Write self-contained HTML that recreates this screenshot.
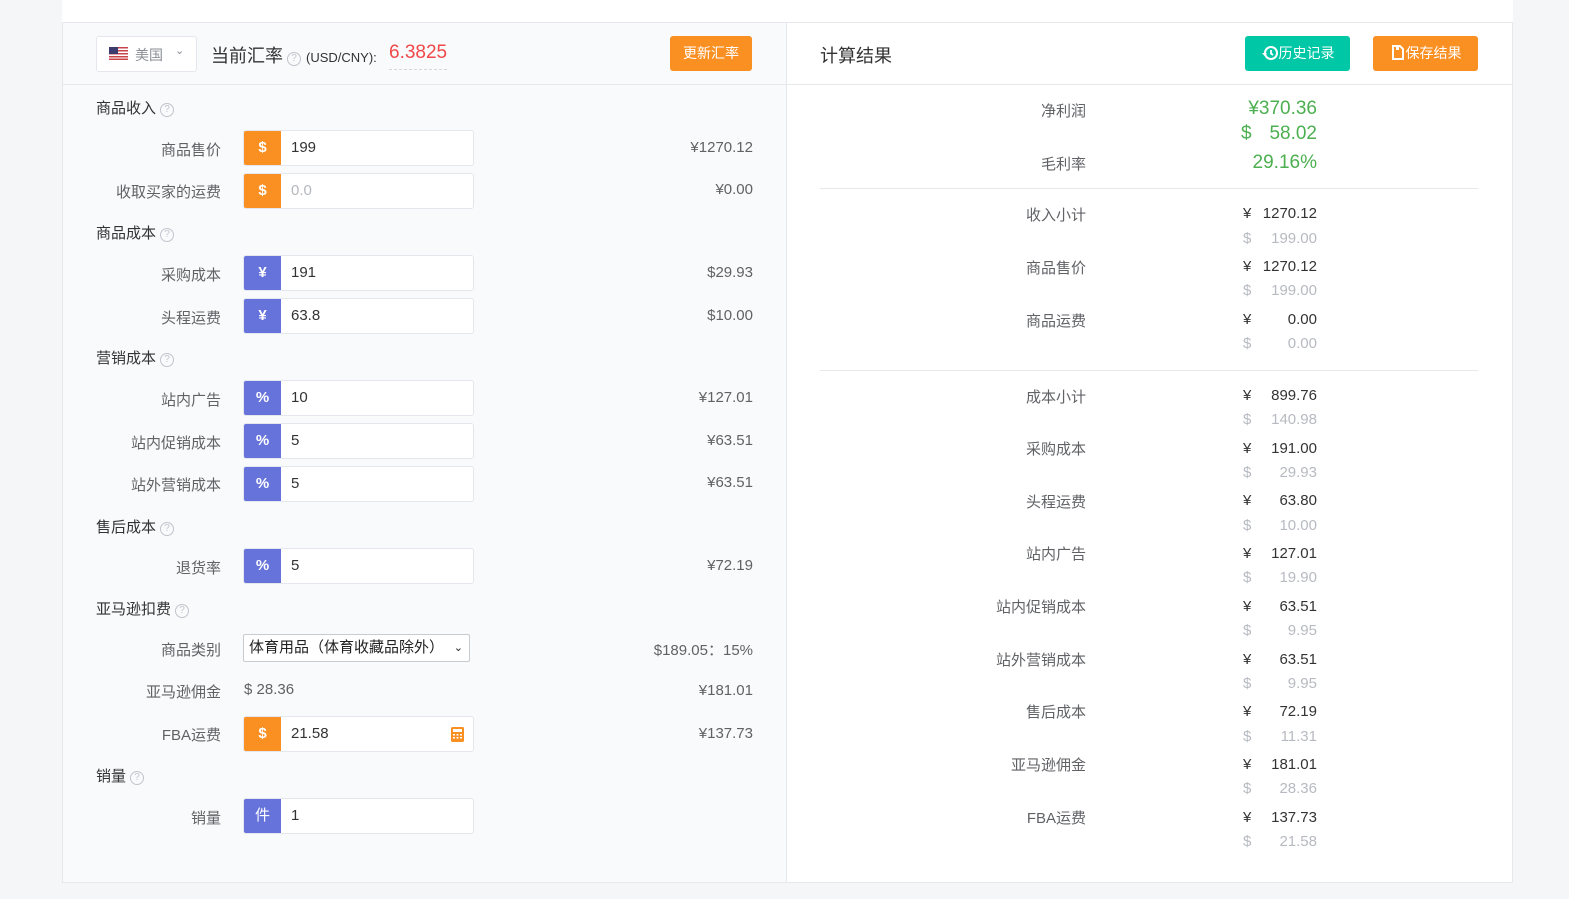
<!DOCTYPE html>
<html><head><meta charset="utf-8"><style>
*{box-sizing:border-box;margin:0;padding:0}
body{width:1569px;height:899px;background:#f5f6f8;font-family:"Liberation Sans","Noto Sans CJK SC",sans-serif;font-size:15px;color:#606266;position:relative;overflow:hidden}
.a{position:absolute;white-space:nowrap}
.top{left:62px;top:0;width:1451px;height:23px;background:#fff;border-bottom:1px solid #e6e8eb}
.lp{left:62px;top:23px;width:725px;height:860px;background:#f9fafc;border:1px solid #e6e8eb;border-top:none}
.rp{left:787px;top:23px;width:726px;height:860px;background:#fff;border:1px solid #e6e8eb;border-left:none;border-top:none}
.hl{position:absolute;height:1px;background:#e6e8eb}
.sec{left:96px;font-size:15px;color:#333}
.q{display:inline-block;width:14px;height:14px;border:1px solid #c0c4cc;border-radius:50%;font-size:10px;line-height:12px;text-align:center;color:#c0c4cc;margin-left:4px;vertical-align:1px}
.lab{width:160px;left:61px;text-align:right;color:#606266}
.inp{left:243px;width:231px;height:36px;background:#fff;border:1px solid #e4e7ed;border-radius:3px;overflow:hidden}
.ad{position:absolute;left:0;top:0;width:37px;height:100%;color:#fff;text-align:center;line-height:34px;font-weight:bold;font-size:15px}
.or{background:#fa8f22}.bl{background:#6673db}
.iv{position:absolute;left:47px;top:0;line-height:34px;color:#333;font-size:15px}
.rv{right:816px;text-align:right;color:#606266;font-size:15px}
.rl{right:483px;text-align:right;color:#606266;font-size:15px}
.ys{left:1243px;color:#333}
.yn{right:252px;text-align:right;color:#333}
.ds{left:1243px;color:#b7bac1}
.dn{right:252px;text-align:right;color:#b7bac1}
.btn{height:35px;border-radius:3px;color:#fff;font-size:14px;line-height:35px;text-align:center}
</style></head><body>
<div class="a top"></div>
<div class="a lp"></div>
<div class="a rp"></div>
<div class="hl" style="left:62px;top:84px;width:1451px"></div>

<div class="a" style="left:96px;top:36px;width:101px;height:36px;background:#fff;border:1px solid #e4e7ed;border-radius:3px"></div>
<svg class="a" style="left:109px;top:47px" width="19" height="13" viewBox="0 0 19 13"><rect width="19" height="13" fill="#fff"/><g fill="#c8444a"><rect y="0" width="19" height="1.5"/><rect y="3" width="19" height="1.5"/><rect y="6" width="19" height="1.5"/><rect y="9" width="19" height="1.5"/><rect y="11.5" width="19" height="1.5"/></g><rect width="9" height="7" fill="#3c3b6e"/></svg>
<div class="a" style="left:135px;top:45px;color:#8a8e96;font-size:14px">美国</div>
<div class="a" style="left:175px;top:44px;color:#8a8e96;font-size:11px">⌄</div>
<div class="a" style="left:211px;top:42px;font-size:18px;color:#333">当前汇率<span class="q">?</span> <span style="font-size:13px;color:#333">(USD/CNY):</span></div>
<div class="a" style="left:389px;top:42px;font-size:19px;color:#f04848;border-bottom:1px dashed #d4d7dc;padding:0 0 5px">6.3825</div>
<div class="a btn" style="left:670px;top:36px;width:82px;background:#fa8f22">更新汇率</div>

<div class="a" style="left:820px;top:42px;font-size:18px;color:#333">计算结果</div>
<div class="a btn" style="left:1245px;top:36px;width:105px;background:#00c8a6"><svg width="18" height="16" viewBox="0 0 18 16" style="vertical-align:-3px"><circle cx="10" cy="8" r="6" fill="none" stroke="#fff" stroke-width="2"/><path d="M10 5v3.5l2 1.5" stroke="#fff" stroke-width="1.8" fill="none"/><path d="M1 8h5l-2.5 3z" fill="#fff"/></svg>历史记录</div>
<div class="a btn" style="left:1373px;top:36px;width:105px;background:#fa8f22"><svg width="16" height="17" viewBox="0 0 16 17" style="vertical-align:-3px"><path d="M3 2h7l3 3v10H3z" fill="none" stroke="#fff" stroke-width="2"/><rect x="6" y="2" width="3" height="4" fill="#fff"/></svg>保存结果</div>

<div class="a sec" style="top:97px">商品收入<span class="q">?</span></div>
<div class="a lab" style="top:139px">商品售价</div>
<div class="a inp" style="top:130px"><div class="ad or">$</div><div class="iv">199</div></div>
<div class="a rv" style="top:139px">¥1270.12</div>
<div class="a lab" style="top:181px">收取买家的运费</div>
<div class="a inp" style="top:173px"><div class="ad or">$</div><div class="iv" style="color:#b4b7bd">0.0</div></div>
<div class="a rv" style="top:181px">¥0.00</div>

<div class="a sec" style="top:222px">商品成本<span class="q">?</span></div>
<div class="a lab" style="top:264px">采购成本</div>
<div class="a inp" style="top:255px"><div class="ad bl">¥</div><div class="iv">191</div></div>
<div class="a rv" style="top:264px">$29.93</div>
<div class="a lab" style="top:307px">头程运费</div>
<div class="a inp" style="top:298px"><div class="ad bl">¥</div><div class="iv">63.8</div></div>
<div class="a rv" style="top:307px">$10.00</div>

<div class="a sec" style="top:347px">营销成本<span class="q">?</span></div>
<div class="a lab" style="top:389px">站内广告</div>
<div class="a inp" style="top:380px"><div class="ad bl">%</div><div class="iv">10</div></div>
<div class="a rv" style="top:389px">¥127.01</div>
<div class="a lab" style="top:432px">站内促销成本</div>
<div class="a inp" style="top:423px"><div class="ad bl">%</div><div class="iv">5</div></div>
<div class="a rv" style="top:432px">¥63.51</div>
<div class="a lab" style="top:474px">站外营销成本</div>
<div class="a inp" style="top:466px"><div class="ad bl">%</div><div class="iv">5</div></div>
<div class="a rv" style="top:474px">¥63.51</div>

<div class="a sec" style="top:516px">售后成本<span class="q">?</span></div>
<div class="a lab" style="top:557px">退货率</div>
<div class="a inp" style="top:548px"><div class="ad bl">%</div><div class="iv">5</div></div>
<div class="a rv" style="top:557px">¥72.19</div>

<div class="a sec" style="top:598px">亚马逊扣费<span class="q">?</span></div>
<div class="a lab" style="top:639px">商品类别</div>
<div class="a" style="left:243px;top:634px;width:227px;height:28px;background:#fff;border:1px solid #c8cbd0;border-radius:2px;color:#222;font-size:15px;line-height:26px;padding-left:5px">体育用品（体育收藏品除外）<span style="position:absolute;right:6px;font-size:11px">⌄</span></div>
<div class="a rv" style="top:639px">$189.05：15%</div>
<div class="a lab" style="top:681px">亚马逊佣金</div>
<div class="a" style="left:244px;top:681px;color:#606266">$ 28.36</div>
<div class="a rv" style="top:682px">¥181.01</div>
<div class="a lab" style="top:724px">FBA运费</div>
<div class="a inp" style="top:716px"><div class="ad or">$</div><div class="iv">21.58</div>
<svg style="position:absolute;right:9px;top:10px" width="13" height="15" viewBox="0 0 13 15"><rect width="13" height="15" rx="1.5" fill="#fa8f22"/><rect x="2" y="2" width="9" height="3" fill="#fff"/><g fill="#fff"><rect x="2" y="7" width="2" height="1.5"/><rect x="5.5" y="7" width="2" height="1.5"/><rect x="9" y="7" width="2" height="1.5"/><rect x="2" y="10" width="2" height="1.5"/><rect x="5.5" y="10" width="2" height="1.5"/><rect x="9" y="10" width="2" height="1.5"/></g></svg></div>
<div class="a rv" style="top:725px">¥137.73</div>

<div class="a sec" style="top:765px">销量<span class="q">?</span></div>
<div class="a lab" style="top:807px">销量</div>
<div class="a inp" style="top:798px"><div class="ad bl" style="font-weight:normal">件</div><div class="iv">1</div></div>

<div class="a rl" style="top:100px">净利润</div>
<div class="a" style="right:252px;top:98px;font-size:19px;color:#4caf50;text-align:right">¥370.36</div>
<div class="a" style="left:1241px;top:123px;font-size:19px;color:#4caf50">$</div>
<div class="a" style="right:252px;top:123px;font-size:19px;color:#4caf50">58.02</div>
<div class="a rl" style="top:153px">毛利率</div>
<div class="a" style="right:252px;top:152px;font-size:19px;color:#4caf50">29.16%</div>
<div class="hl" style="left:820px;top:188px;width:658px"></div>

<div class="a rl" style="top:204px">收入小计</div><div class="a ys" style="top:205px">¥</div><div class="a yn" style="top:205px">1270.12</div><div class="a ds" style="top:230px">$</div><div class="a dn" style="top:230px">199.00</div>
<div class="a rl" style="top:257px">商品售价</div><div class="a ys" style="top:258px">¥</div><div class="a yn" style="top:258px">1270.12</div><div class="a ds" style="top:282px">$</div><div class="a dn" style="top:282px">199.00</div>
<div class="a rl" style="top:310px">商品运费</div><div class="a ys" style="top:311px">¥</div><div class="a yn" style="top:311px">0.00</div><div class="a ds" style="top:335px">$</div><div class="a dn" style="top:335px">0.00</div>
<div class="hl" style="left:820px;top:370px;width:658px"></div>
<div class="a rl" style="top:386px">成本小计</div><div class="a ys" style="top:387px">¥</div><div class="a yn" style="top:387px">899.76</div><div class="a ds" style="top:411px">$</div><div class="a dn" style="top:411px">140.98</div>
<div class="a rl" style="top:438px">采购成本</div><div class="a ys" style="top:440px">¥</div><div class="a yn" style="top:440px">191.00</div><div class="a ds" style="top:464px">$</div><div class="a dn" style="top:464px">29.93</div>
<div class="a rl" style="top:491px">头程运费</div><div class="a ys" style="top:492px">¥</div><div class="a yn" style="top:492px">63.80</div><div class="a ds" style="top:517px">$</div><div class="a dn" style="top:517px">10.00</div>
<div class="a rl" style="top:543px">站内广告</div><div class="a ys" style="top:545px">¥</div><div class="a yn" style="top:545px">127.01</div><div class="a ds" style="top:569px">$</div><div class="a dn" style="top:569px">19.90</div>
<div class="a rl" style="top:596px">站内促销成本</div><div class="a ys" style="top:598px">¥</div><div class="a yn" style="top:598px">63.51</div><div class="a ds" style="top:622px">$</div><div class="a dn" style="top:622px">9.95</div>
<div class="a rl" style="top:649px">站外营销成本</div><div class="a ys" style="top:651px">¥</div><div class="a yn" style="top:651px">63.51</div><div class="a ds" style="top:675px">$</div><div class="a dn" style="top:675px">9.95</div>
<div class="a rl" style="top:701px">售后成本</div><div class="a ys" style="top:703px">¥</div><div class="a yn" style="top:703px">72.19</div><div class="a ds" style="top:728px">$</div><div class="a dn" style="top:728px">11.31</div>
<div class="a rl" style="top:754px">亚马逊佣金</div><div class="a ys" style="top:756px">¥</div><div class="a yn" style="top:756px">181.01</div><div class="a ds" style="top:780px">$</div><div class="a dn" style="top:780px">28.36</div>
<div class="a rl" style="top:807px">FBA运费</div><div class="a ys" style="top:809px">¥</div><div class="a yn" style="top:809px">137.73</div><div class="a ds" style="top:833px">$</div><div class="a dn" style="top:833px">21.58</div>
</body></html>
